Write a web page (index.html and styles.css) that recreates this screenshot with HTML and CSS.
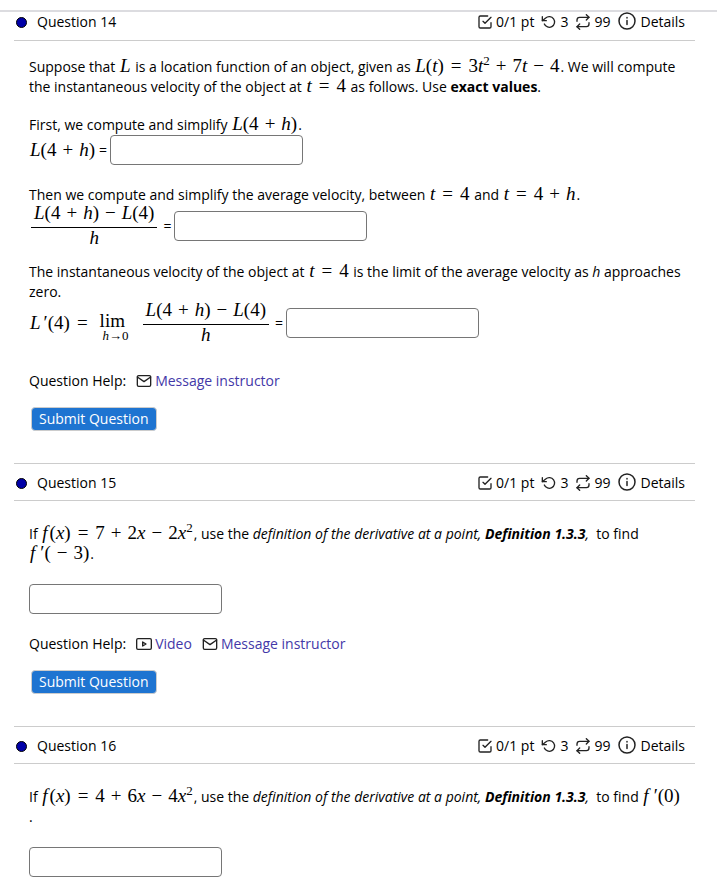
FILE: index.html
```
<!DOCTYPE html>
<html lang="en">
<head>
    <meta charset="UTF-8">
    <meta name="viewport" content="width=device-width, initial-scale=1.0">
    <title>Questions</title>
    <link rel="stylesheet" href="styles.css">
</head>
<body>
    <!-- Shared icons -->
    <svg class="sprite" width="0" height="0" aria-hidden="true">
        <symbol id="check" viewBox="0 0 24 24"><path d="M9 11l3 3L21 5"/><path d="M21 13v6a2 2 0 0 1-2 2H5a2 2 0 0 1-2-2V5a2 2 0 0 1 2-2h11"/></symbol>
        <symbol id="undo" viewBox="0 0 24 24"><path d="M2 4v6h6"/><path d="M5 15a8 8 0 1 0 2-9L2 10"/></symbol>
        <symbol id="repeat" viewBox="0 0 24 24"><path d="M17 1l4 4-4 4"/><path d="M3 11V9a4 4 0 0 1 4-4h14"/><path d="M7 23l-4-4 4-4"/><path d="M21 13v2a4 4 0 0 1-4 4H3"/></symbol>
        <symbol id="info" viewBox="0 0 40 40"><circle cx="20" cy="20" r="16"/><path d="M20 19v8M20 13v1"/></symbol>
        <symbol id="mail" viewBox="0 0 24 24"><rect x="2" y="4" width="20" height="16" rx="2"/><path d="M22 6l-10 7L2 6"/></symbol>
        <symbol id="video" viewBox="0 0 24 24"><rect x="1" y="4" width="22" height="16" rx="2"/><path d="M10 9l5 3-5 3z"/></symbol>
    </svg>

    <div class="topbar"></div>

    <main>
        <section class="question">
            <header>
                <span class="dot"></span>
                <h2>Question 14</h2>
                <div class="status">
                    <span><svg class="icon"><use href="#check"/></svg>0/1 pt</span>
                    <span><svg class="icon"><use href="#undo"/></svg>3</span>
                    <span><svg class="icon"><use href="#repeat"/></svg>99</span>
                    <a href="#" class="details"><svg class="icon-info"><use href="#info"/></svg>Details</a>
                </div>
            </header>
            <div class="content">
                <p>Suppose that <span class="math"><i>L</i></span> is a location function of an object, given as <span class="math"><i>L</i>(<i>t</i>)<span class="rel">=</span>3<i>t</i><sup>2</sup><span class="op">+</span>7<i>t</i><span class="op">−</span>4</span>. We will compute the instantaneous velocity of the object at <span class="math"><i>t</i><span class="rel">=</span>4</span> as follows. Use <b>exact values</b>.</p>
                <p>First, we compute and simplify <span class="math"><i>L</i>(4<span class="op">+</span><i>h</i>)</span>.</p>
                <div class="answer">
                    <label for="q14a"><span class="math"><i>L</i>(4<span class="op">+</span><i>h</i>)</span><span class="equals">=</span></label>
                    <input type="text" id="q14a">
                </div>
                <p>Then we compute and simplify the average velocity, between <span class="math"><i>t</i><span class="rel">=</span>4</span> and <span class="math"><i>t</i><span class="rel">=</span>4<span class="op">+</span><i>h</i></span>.</p>
                <div class="answer tall">
                    <label for="q14b">
                        <span class="math frac"><span class="num"><i>L</i>(4<span class="op">+</span><i>h</i>)<span class="op">−</span><i>L</i>(4)</span><span class="den"><i>h</i></span></span>
                        <span class="equals">=</span>
                    </label>
                    <input type="text" id="q14b">
                </div>
                <p>The instantaneous velocity of the object at <span class="math"><i>t</i><span class="rel">=</span>4</span> is the limit of the average velocity as <em>h</em> approaches zero.</p>
                <div class="answer tall">
                    <label for="q14c">
                        <span class="math"><i>L</i><span class="prime">′</span>(4)<span class="rel">=</span></span>
                        <span class="math lim"><span>lim</span><small><i>h</i>→0</small></span>
                        <span class="math frac"><span class="num"><i>L</i>(4<span class="op">+</span><i>h</i>)<span class="op">−</span><i>L</i>(4)</span><span class="den"><i>h</i></span></span>
                        <span class="equals">=</span>
                    </label>
                    <input type="text" id="q14c">
                </div>
                <div class="help">
                    <span>Question Help:</span>
                    <a href="#"><svg class="icon"><use href="#mail"/></svg>Message instructor</a>
                </div>
                <button type="button">Submit Question</button>
            </div>
        </section>

        <section class="question">
            <header>
                <span class="dot"></span>
                <h2>Question 15</h2>
                <div class="status">
                    <span><svg class="icon"><use href="#check"/></svg>0/1 pt</span>
                    <span><svg class="icon"><use href="#undo"/></svg>3</span>
                    <span><svg class="icon"><use href="#repeat"/></svg>99</span>
                    <a href="#" class="details"><svg class="icon-info"><use href="#info"/></svg>Details</a>
                </div>
            </header>
            <div class="content">
                <p>If <span class="math"><i class="fn">f</i>(<i>x</i>)<span class="rel">=</span>7<span class="op">+</span>2<i>x</i><span class="op">−</span>2<i>x</i><sup>2</sup></span>, use the <em>definition of the derivative at a point, <b>Definition 1.3.3</b>,</em>&nbsp; to find <span class="math"><i class="fn">f</i><span class="prime">′</span>(<span class="op">−</span>3)</span>.</p>
                <input type="text" aria-label="Answer to question 15">
                <div class="help">
                    <span>Question Help:</span>
                    <a href="#"><svg class="icon"><use href="#video"/></svg>Video</a>
                    <a href="#"><svg class="icon"><use href="#mail"/></svg>Message instructor</a>
                </div>
                <button type="button">Submit Question</button>
            </div>
        </section>

        <section class="question">
            <header>
                <span class="dot"></span>
                <h2>Question 16</h2>
                <div class="status">
                    <span><svg class="icon"><use href="#check"/></svg>0/1 pt</span>
                    <span><svg class="icon"><use href="#undo"/></svg>3</span>
                    <span><svg class="icon"><use href="#repeat"/></svg>99</span>
                    <a href="#" class="details"><svg class="icon-info"><use href="#info"/></svg>Details</a>
                </div>
            </header>
            <div class="content">
                <p>If <span class="math"><i class="fn">f</i>(<i>x</i>)<span class="rel">=</span>4<span class="op">+</span>6<i>x</i><span class="op">−</span>4<i>x</i><sup>2</sup></span>, use the <em>definition of the derivative at a point, <b>Definition 1.3.3</b>,</em>&nbsp; to find <span class="math"><i class="fn">f</i><span class="prime">′</span>(0)</span>.</p>
                <input type="text" aria-label="Answer to question 16">
            </div>
        </section>
    </main>
</body>
</html>
```
FILE: styles.css
```
* {
    box-sizing: border-box;
}

body {
    margin: 0;
    padding-top: 10px;
    background-color: #fff;
    color: #000;
    font-family: "Open Sans", sans-serif;
    font-size: 14px;
    line-height: 20px;
}

.sprite {
    position: absolute;
}

.topbar {
    height: 2px;
    background-color: #dcdce0;
}

main {
    margin: 0 22px 0 14px;
}

/* Question header */
header {
    display: flex;
    align-items: center;
    padding: 9px 10px 7px 2px;
    border-top: 1px solid #ccc;
    border-bottom: 1px solid #ccc;
}

.question:first-child header {
    border-top: none;
    padding-top: 0;
    padding-bottom: 8px;
}

.dot {
    width: 11px;
    height: 11px;
    margin-right: 10px;
    border: 1px solid #000;
    border-radius: 50%;
    background-color: #0000a8;
}

h2 {
    margin: 0;
    font-size: 14px;
    font-weight: normal;
    line-height: 20px;
}

.status {
    display: flex;
    align-items: center;
    gap: 7px;
    height: 20px;
    margin-left: auto;
}

.status span,
.details,
.help a {
    display: flex;
    align-items: center;
    gap: 3px;
}

.details {
    color: #000;
    text-decoration: none;
}

.icon,
.icon-info {
    width: 16px;
    height: 16px;
    fill: none;
    stroke: #222;
    stroke-width: 2;
    stroke-linecap: round;
    stroke-linejoin: round;
}

.icon-info {
    width: 20px;
    height: 20px;
    margin-bottom: 3px;
    stroke-width: 3;
}

/* Question body */
.content {
    padding: 23px 12px 32px 15px;
}

.question:first-child .content {
    padding-top: 16px;
}

p {
    margin: 0;
}

p + p {
    margin-top: 18px;
}

.answer {
    display: flex;
    align-items: center;
}

.answer + p {
    margin-top: 20px;
}

.tall + p {
    margin-top: 16px;
}

.answer label {
    display: flex;
    align-items: center;
    gap: 3px;
}

input {
    display: block;
    width: 193px;
    height: 30px;
    margin-left: 3px;
    padding: 4px 6px;
    border: 1px solid #767676;
    border-radius: 4px;
    background-color: #fff;
    font: inherit;
}

p + input {
    margin: 20px 0 0;
}

.help {
    display: flex;
    align-items: center;
    gap: 10px;
    margin: 20px 0 16px;
}

.answer + .help {
    margin-top: 28px;
}

.help a {
    color: #4338a8;
    text-decoration: none;
}

button {
    display: block;
    height: 24px;
    margin-left: 2px;
    padding: 0 7px;
    border: 1px solid #ccc;
    border-radius: 4px;
    background-color: #1e74d1;
    color: #fff;
    font: inherit;
    line-height: 22px;
}

/* Formulas */
.math {
    display: inline-block;
    margin: 0 1px;
    font-family: "Liberation Serif", serif;
    font-size: 19px;
    line-height: 16px;
    white-space: nowrap;
}

.op {
    margin: 0 6px;
}

.rel {
    margin: 0 7px;
}

.fn {
    margin-right: 2px;
}

.prime {
    margin-left: 3px;
}

sup {
    font-size: 13px;
    line-height: 0;
}

.frac {
    display: flex;
    flex-direction: column;
    align-items: center;
    margin: 0 3px 0 2px;
}

.num {
    padding: 0 3px 6px;
    border-bottom: 1px solid #000;
}

.den {
    padding-top: 2px;
}

.lim {
    display: flex;
    flex-direction: column;
    margin-right: 9px;
    padding-top: 10px;
}

.lim small {
    padding-left: 3px;
    font-size: 13px;
    line-height: 14px;
}
```
